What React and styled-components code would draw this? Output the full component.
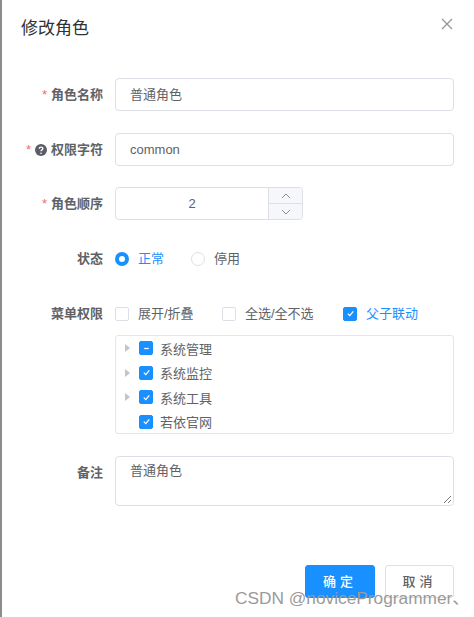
import React from 'react';
import styled, { createGlobalStyle } from 'styled-components';

const GlobalStyle = createGlobalStyle`
  html, body {
    margin: 0;
    padding: 0;
    background: #fff;
  }
  body {
    font-family: "Liberation Sans", "Noto Sans CJK SC", sans-serif;
  }
`;

const Page = styled.div`
  position: relative;
  width: 474px;
  height: 617px;
  overflow: hidden;
  box-sizing: border-box;
  border-left: 2px solid #8c8c8c;
  background: #fff;
`;

const Header = styled.div`
  display: flex;
  justify-content: space-between;
  align-items: flex-start;
  height: 78px;
  padding: 17px 21px 0 19px;
  box-sizing: border-box;
`;

const Title = styled.div`
  font-size: 17px;
  line-height: 24px;
  color: #303133;
`;

const Close = styled.svg`
  width: 12px;
  height: 12px;
  margin-top: 1px;
  stroke: #909399;
  stroke-width: 1.2;
  fill: none;
`;

const Form = styled.div`
  display: flex;
  flex-direction: column;
  width: 452px;
`;

const Row = styled.div`
  display: grid;
  grid-template-columns: 101px 339px;
  column-gap: 12px;
  align-items: ${(p) => (p.$top ? 'start' : 'center')};
  margin-bottom: ${(p) => p.$gap}px;
`;

const Label = styled.div`
  display: flex;
  justify-content: flex-end;
  align-items: center;
  font-size: 13px;
  font-weight: 700;
  line-height: 33px;
  color: #606266;
`;

const Star = styled.span`
  color: #f56c6c;
  margin-right: 4px;
  font-weight: 400;
`;

const Help = styled.svg`
  width: 12px;
  height: 12px;
  margin-right: 4px;
`;

const Input = styled.div`
  height: 33px;
  box-sizing: border-box;
  padding-left: 14px;
  border: 1px solid #dcdfe6;
  border-radius: 4px;
  font-size: 13px;
  line-height: 31px;
  color: #606266;
`;

const NumberBox = styled.div`
  display: flex;
  width: 188px;
  height: 33px;
  box-sizing: border-box;
  border: 1px solid #dcdfe6;
  border-radius: 4px;
  overflow: hidden;
`;

const NumberValue = styled.div`
  flex: 1;
  text-align: center;
  font-size: 13px;
  line-height: 31px;
  color: #606266;
`;

const Steppers = styled.div`
  display: flex;
  flex-direction: column;
  width: 33px;
  border-left: 1px solid #dcdfe6;
  background: #f5f7fa;
`;

const Step = styled.div`
  flex: 1;
  display: flex;
  align-items: center;
  justify-content: center;
  & + & {
    border-top: 1px solid #dcdfe6;
  }
`;

const Chevron = styled.svg`
  width: 10px;
  height: 6px;
  fill: none;
  stroke: #909399;
  stroke-width: 1;
`;

const Options = styled.div`
  display: flex;
  align-items: center;
  height: 33px;
`;

const Option = styled.div`
  display: flex;
  align-items: center;
  width: ${(p) => p.$width}px;
  font-size: 13px;
  line-height: 16px;
  color: ${(p) => (p.$active ? '#1890ff' : '#606266')};
`;

const Radio = styled.span`
  width: 14px;
  height: 14px;
  box-sizing: border-box;
  margin-right: 9px;
  border-radius: 50%;
  border: ${(p) => (p.$on ? '4px solid #1890ff' : '1px solid #dcdfe6')};
  background: #fff;
`;

const Box = styled.span`
  display: flex;
  align-items: center;
  justify-content: center;
  flex: none;
  width: 14px;
  height: 14px;
  box-sizing: border-box;
  margin-right: ${(p) => p.$gap}px;
  border-radius: 2px;
  border: 1px solid ${(p) => (p.$on ? '#1890ff' : '#dcdfe6')};
  background: ${(p) => (p.$on ? '#1890ff' : '#fff')};
`;

const Tick = styled.svg`
  width: 9px;
  height: 9px;
  fill: none;
  stroke: #fff;
  stroke-width: 1.3;
`;

const Tree = styled.div`
  height: 99px;
  box-sizing: border-box;
  border: 1px solid #e5e6e7;
  border-radius: 3px;
`;

const TreeNode = styled.div`
  display: flex;
  align-items: center;
  height: 24.5px;
  padding-left: 9px;
  font-size: 13px;
  color: #606266;
`;

const Caret = styled.span`
  width: 0;
  height: 0;
  margin-right: 9px;
  border-style: solid;
  border-width: 4px 0 4px 5px;
  border-color: transparent transparent transparent ${(p) => (p.$hidden ? 'transparent' : '#c0c4cc')};
`;

const Textarea = styled.div`
  position: relative;
  height: 50px;
  box-sizing: border-box;
  padding: 4px 14px;
  border: 1px solid #dcdfe6;
  border-radius: 4px;
  font-size: 13px;
  line-height: 20px;
  color: #606266;
`;

const Grip = styled.svg`
  position: absolute;
  right: 1px;
  bottom: 1px;
  width: 9px;
  height: 9px;
  stroke: #777;
  stroke-width: 1;
`;

const Footer = styled.div`
  display: flex;
  justify-content: flex-end;
  gap: 10px;
  width: 452px;
  margin-top: 59px;
`;

const Button = styled.div`
  width: ${(p) => (p.$primary ? 70 : 69)}px;
  height: 33px;
  box-sizing: border-box;
  border: 1px solid ${(p) => (p.$primary ? '#1890ff' : '#dcdfe6')};
  border-radius: 3px;
  background: ${(p) => (p.$primary ? '#1890ff' : '#fff')};
  color: ${(p) => (p.$primary ? '#fff' : '#606266')};
  font-size: 13px;
  font-weight: 500;
  letter-spacing: 4px;
  line-height: 32px;
  text-align: center;
`;

const Watermark = styled.div`
  position: absolute;
  left: 233px;
  top: 588px;
  font-size: 17.3px;
  line-height: 21px;
  white-space: nowrap;
  color: #9a9a9a;
`;

const checkIcon = (
  <Tick viewBox="0 0 9 9">
    <path d="M1.8 4.6 3.8 6.6 7.3 2.4" />
  </Tick>
);

const nodes = [
  { name: '系统管理', half: true },
  { name: '系统监控' },
  { name: '系统工具' },
  { name: '若依官网', leaf: true },
];

const App = () => (
  <>
    <GlobalStyle />
    <Page>
      <Header>
        <Title>修改角色</Title>
        <Close viewBox="0 0 12 12">
          <path d="M1 1 11 11M11 1 1 11" />
        </Close>
      </Header>
      <Form>
        <Row $gap={22}>
          <Label><Star>*</Star>角色名称</Label>
          <Input>普通角色</Input>
        </Row>
        <Row $gap={21}>
          <Label>
            <Star>*</Star>
            <Help viewBox="0 0 12 12">
              <circle cx="6" cy="6" r="6" fill="#5a5e66" />
              <path d="M4.2 4.7C4.2 2.6 7.9 2.6 7.9 4.6 7.9 5.9 6 5.8 6 7.2" fill="none" stroke="#fff" strokeWidth="1.3" />
              <circle cx="6" cy="9.2" r="0.8" fill="#fff" />
            </Help>
            权限字符
          </Label>
          <Input>common</Input>
        </Row>
        <Row $gap={22}>
          <Label><Star>*</Star>角色顺序</Label>
          <NumberBox>
            <NumberValue>2</NumberValue>
            <Steppers>
              <Step>
                <Chevron viewBox="0 0 10 6"><path d="M1 5 5 1 9 5" /></Chevron>
              </Step>
              <Step>
                <Chevron viewBox="0 0 10 6"><path d="M1 1 5 5 9 1" /></Chevron>
              </Step>
            </Steppers>
          </NumberBox>
        </Row>
        <Row $gap={22}>
          <Label>状态</Label>
          <Options>
            <Option $width={76} $active><Radio $on />正常</Option>
            <Option $width={60}><Radio />停用</Option>
          </Options>
        </Row>
        <Row $gap={5}>
          <Label>菜单权限</Label>
          <Options>
            <Option $width={107}><Box $gap={9} />展开/折叠</Option>
            <Option $width={121}><Box $gap={9} />全选/全不选</Option>
            <Option $width={90} $active><Box $on $gap={9}>{checkIcon}</Box>父子联动</Option>
          </Options>
        </Row>
        <Row $gap={22} $top>
          <span />
          <Tree>
            {nodes.map((node) => (
              <TreeNode key={node.name}>
                <Caret $hidden={node.leaf} />
                <Box $on $gap={7}>
                  {node.half ? (
                    <Tick viewBox="0 0 9 9"><path d="M2.2 4.5H6.8" /></Tick>
                  ) : checkIcon}
                </Box>
                {node.name}
              </TreeNode>
            ))}
          </Tree>
        </Row>
        <Row $gap={0} $top>
          <Label>备注</Label>
          <Textarea>
            普通角色
            <Grip viewBox="0 0 9 9">
              <path d="M1 8 8 1M5 8 8 5" />
            </Grip>
          </Textarea>
        </Row>
      </Form>
      <Footer>
        <Button $primary>确定</Button>
        <Button>取消</Button>
      </Footer>
      <Watermark>CSDN @noviceProgrammer、</Watermark>
    </Page>
  </>
);

export default App;
